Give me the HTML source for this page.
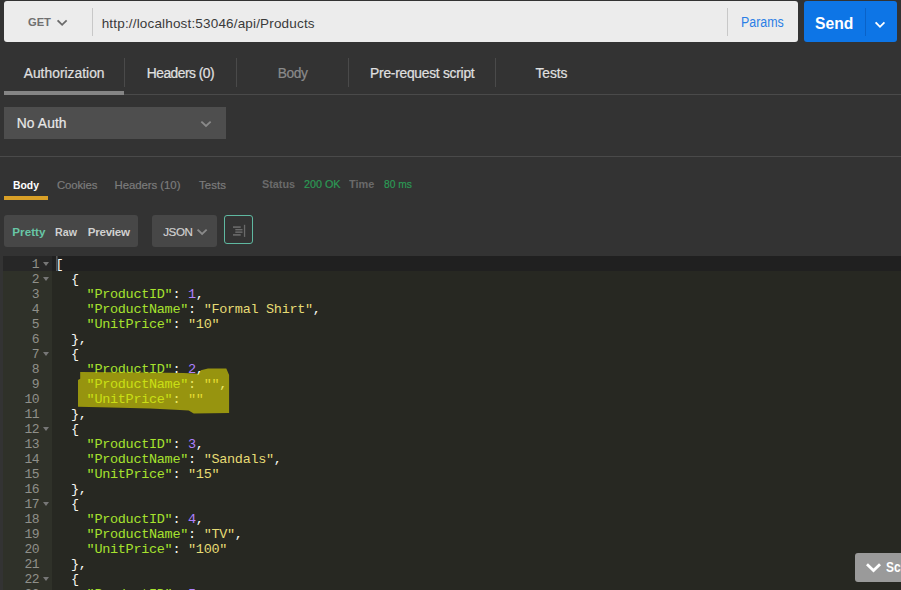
<!DOCTYPE html>
<html><head><meta charset="utf-8">
<style>
*{margin:0;padding:0;box-sizing:border-box}
html,body{width:901px;height:590px;overflow:hidden;background:#333333;font-family:"Liberation Sans",sans-serif}
.a{position:absolute;white-space:nowrap}
.tx{line-height:20px;-webkit-text-stroke:0.2px}
.tx.b{-webkit-text-stroke:0}
#url{left:4px;top:1px;width:794px;height:41px;background:#ececec;border-radius:3px}
#send{left:804px;top:1px;width:93px;height:41px;background:#0d75e6;border-radius:3px}
#editor{left:3px;top:256px;width:898px;height:334px;background:#272822}
#gutter{left:3px;top:256px;width:49px;height:334px;background:#2f3129}
.code{position:absolute;left:55.4px;font-family:"Liberation Mono",monospace;font-size:13.5px;letter-spacing:-0.3px;line-height:15px;color:#f8f8f2;white-space:pre}
.lns{left:3px;width:36px;letter-spacing:-0.5px;text-align:right;font-family:"Liberation Mono",monospace;font-size:13px;line-height:15px;color:#8f908a}
.fold{position:absolute;left:42.5px;width:0;height:0;margin-top:6px;border-left:3px solid transparent;border-right:3px solid transparent;border-top:4px solid #777}
.k{color:#a6e22e}.s{color:#e6db74}.n{color:#ae81ff}
</style></head><body>
<div class="a" id="url"></div>
<div class="a" style="left:92px;top:8px;width:1px;height:28px;background:#c8c8c8"></div>
<div class="a" style="left:727px;top:8px;width:1px;height:28px;background:#c8c8c8"></div>
<div class="a" id="send"></div>
<div class="a" style="left:865px;top:8px;width:1px;height:28px;background:#0a62c8"></div>

<!-- request tabs -->
<div class="a" style="left:4px;top:94px;width:897px;height:1px;background:#4a4a4a"></div>
<div class="a" style="left:4px;top:91px;width:120px;height:4px;background:#858585"></div>
<div class="a" style="left:124px;top:58px;width:1px;height:29px;background:#4a4a4a"></div>
<div class="a" style="left:236px;top:58px;width:1px;height:29px;background:#4a4a4a"></div>
<div class="a" style="left:348px;top:58px;width:1px;height:29px;background:#4a4a4a"></div>
<div class="a" style="left:495px;top:58px;width:1px;height:29px;background:#4a4a4a"></div>

<!-- auth -->
<div class="a" style="left:4px;top:107px;width:222px;height:32px;background:#4e4e4e"></div>
<div class="a" style="left:0;top:156px;width:901px;height:1px;background:#4a4a4a"></div>

<!-- response tabs -->
<div class="a" style="left:4px;top:196px;width:44px;height:4px;background:#d9a027"></div>

<!-- pretty bar -->
<div class="a" style="left:4px;top:215px;width:134px;height:32px;background:#474747;border-radius:3px"></div>
<div class="a" style="left:152px;top:215px;width:65px;height:32px;background:#474747;border-radius:3px"></div>
<div class="a" style="left:224px;top:215px;width:29px;height:29px;border:1px solid #5fb8a0;border-radius:3px"></div>

<!-- editor -->
<div class="a" id="editor"></div>
<div class="a" id="gutter"></div>
<div class="a" style="left:3px;top:256px;width:898px;height:15px;background:#202020"></div>
<div class="a" style="left:3px;top:256px;width:49px;height:15px;background:#272727"></div>
<div class="a lns" style="top:257px"><div>1</div><div>2</div><div>3</div><div>4</div><div>5</div><div>6</div><div>7</div><div>8</div><div>9</div><div>10</div><div>11</div><div>12</div><div>13</div><div>14</div><div>15</div><div>16</div><div>17</div><div>18</div><div>19</div><div>20</div><div>21</div><div>22</div><div>23</div></div>
<div class="fold" style="top:256px"></div><div class="fold" style="top:271px"></div><div class="fold" style="top:346px"></div><div class="fold" style="top:421px"></div><div class="fold" style="top:496px"></div><div class="fold" style="top:571px"></div>
<div class="a code" style="top:257px">[
  {
    <span class="k">"ProductID"</span>: <span class="n">1</span>,
    <span class="k">"ProductName"</span>: <span class="s">"Formal Shirt"</span>,
    <span class="k">"UnitPrice"</span>: <span class="s">"10"</span>
  },
  {
    <span class="k">"ProductID"</span>: <span class="n">2</span>,
    <span class="k">"ProductName"</span>: <span class="s">""</span>,
    <span class="k">"UnitPrice"</span>: <span class="s">""</span>
  },
  {
    <span class="k">"ProductID"</span>: <span class="n">3</span>,
    <span class="k">"ProductName"</span>: <span class="s">"Sandals"</span>,
    <span class="k">"UnitPrice"</span>: <span class="s">"15"</span>
  },
  {
    <span class="k">"ProductID"</span>: <span class="n">4</span>,
    <span class="k">"ProductName"</span>: <span class="s">"TV"</span>,
    <span class="k">"UnitPrice"</span>: <span class="s">"100"</span>
  },
  {
    <span class="k">"ProductID"</span>: <span class="n">5</span>,</div>

<svg class="a" style="left:0;top:0" width="901" height="590"><path d="M80.2,372 L150,372.6 L183.6,373 L198.8,373.7 L200.9,370.2 L208,368.6 L226.3,368.4 L227.8,372 L229.1,375 L229.1,412.9 L193.7,413.4 L188.7,410.4 L175.4,409.8 L150,408.6 L100.5,407.3 L78,406.7 L78,380 L80.2,378.8 Z" fill="#e2dc04" fill-opacity="0.6"/></svg>

<div class="a" style="left:855px;top:553px;width:60px;height:29px;background:#9a9a9a;border-radius:3px"></div>
<svg class="a" style="left:0;top:0" width="901" height="590" fill="none" stroke-linecap="square">
<path d="M58.2,21 L62.1,24.8 L66,21" stroke="#6a6a6a" stroke-width="1.8"/>
<path d="M876.2,23 L880,26.8 L883.8,23" stroke="#ffffff" stroke-width="1.8"/>
<path d="M202,122.2 L206,126 L210,122.2" stroke="#8a8a8a" stroke-width="1.8"/>
<path d="M198.2,230.2 L202.1,234 L206,230.2" stroke="#8a8a8a" stroke-width="1.8"/>
<path d="M868,565.3 L873.5,570.6 L879,565.3" stroke="#ffffff" stroke-width="2.8"/>
<g fill="#6a6a6a" stroke="none">
<rect x="233" y="226.3" width="7.7" height="1.6"/>
<rect x="235.3" y="229" width="7.2" height="1.4"/>
<rect x="235.3" y="231.4" width="7.2" height="1.5"/>
<rect x="233" y="234.1" width="7.7" height="1.6"/>
<rect x="243.9" y="224.8" width="1.3" height="12.1"/>
</g>
<rect x="56" y="256" width="1.6" height="15" fill="#555" stroke="none"/>
</svg>
<div class="a tx b" id="t_get" style="left:28.10px;top:12.29px;font-size:11.20px;color:#707070;font-weight:bold;letter-spacing:-0.080px;">GET</div>
<div class="a tx b" id="t_url" style="left:101.70px;top:13.60px;font-size:13.50px;color:#3a3a3a;letter-spacing:0.169px;">http://localhost:53046/api/Products</div>
<div class="a tx b" id="t_params" style="left:741.40px;top:13.10px;font-size:13.80px;color:#2a7ee6;transform:scaleX(0.9000);transform-origin:0 0;">Params</div>
<div class="a tx b" id="t_send" style="left:815.30px;top:12.71px;font-size:16.50px;color:#ffffff;font-weight:bold;transform:scaleX(0.9497);transform-origin:0 0;">Send</div>
<div class="a tx" id="t_auth" style="left:23.70px;top:64.05px;font-size:13.80px;color:#e0e0e0;letter-spacing:0.027px;">Authorization</div>
<div class="a tx" id="t_hdr0" style="left:146.80px;top:63.57px;font-size:13.80px;color:#e0e0e0;letter-spacing:-0.512px;">Headers (0)</div>
<div class="a tx" id="t_body" style="left:277.70px;top:64.05px;font-size:13.80px;color:#8a8a8a;letter-spacing:-0.373px;">Body</div>
<div class="a tx" id="t_pre" style="left:370.10px;top:64.05px;font-size:13.80px;color:#e0e0e0;letter-spacing:-0.254px;">Pre-request script</div>
<div class="a tx" id="t_tests" style="left:535.40px;top:64.21px;font-size:13.80px;color:#e0e0e0;letter-spacing:-0.040px;">Tests</div>
<div class="a tx" id="t_noauth" style="left:16.80px;top:114.05px;font-size:13.80px;color:#e8e8e8;letter-spacing:0.107px;">No Auth</div>
<div class="a tx b" id="t_rbody" style="left:13.10px;top:174.94px;font-size:11.40px;color:#ffffff;font-weight:bold;transform:scaleX(0.9111);transform-origin:0 0;">Body</div>
<div class="a tx" id="t_cookies" style="left:57.00px;top:175.10px;font-size:11.40px;color:#7c7c7c;letter-spacing:-0.133px;">Cookies</div>
<div class="a tx" id="t_hdr10" style="left:114.60px;top:175.10px;font-size:11.40px;color:#7c7c7c;letter-spacing:-0.058px;">Headers (10)</div>
<div class="a tx" id="t_rtests" style="left:199.00px;top:175.10px;font-size:11.40px;color:#7c7c7c;letter-spacing:0.080px;">Tests</div>
<div class="a tx b" id="t_status" style="left:261.50px;top:174.19px;font-size:11.50px;color:#6a6a6a;font-weight:bold;transform:scaleX(0.9420);transform-origin:0 0;">Status</div>
<div class="a tx" id="t_200" style="left:303.80px;top:174.19px;font-size:11.50px;color:#2c9a55;transform:scaleX(0.9372);transform-origin:0 0;">200 OK</div>
<div class="a tx b" id="t_time" style="left:348.70px;top:174.19px;font-size:11.50px;color:#6a6a6a;font-weight:bold;transform:scaleX(0.9495);transform-origin:0 0;">Time</div>
<div class="a tx" id="t_80" style="left:384.00px;top:174.19px;font-size:11.50px;color:#2c9a55;transform:scaleX(0.8907);transform-origin:0 0;">80 ms</div>
<div class="a tx b" id="t_pretty" style="left:12.30px;top:221.80px;font-size:11.60px;color:#68c6a6;font-weight:bold;letter-spacing:0.064px;">Pretty</div>
<div class="a tx b" id="t_raw" style="left:55.30px;top:221.80px;font-size:11.60px;color:#d0d0d0;font-weight:bold;transform:scaleX(0.9202);transform-origin:0 0;">Raw</div>
<div class="a tx b" id="t_preview" style="left:87.80px;top:221.80px;font-size:11.60px;color:#d0d0d0;font-weight:bold;letter-spacing:-0.267px;">Preview</div>
<div class="a tx" id="t_json" style="left:163.20px;top:221.80px;font-size:11.60px;color:#d0d0d0;letter-spacing:-0.373px;">JSON</div>
<div class="a tx b" id="t_sc" style="left:886.00px;top:557.25px;font-size:14.00px;color:#ffffff;font-weight:bold;transform:scaleX(0.8500);transform-origin:0 0;">Scroll</div>
</body></html>
